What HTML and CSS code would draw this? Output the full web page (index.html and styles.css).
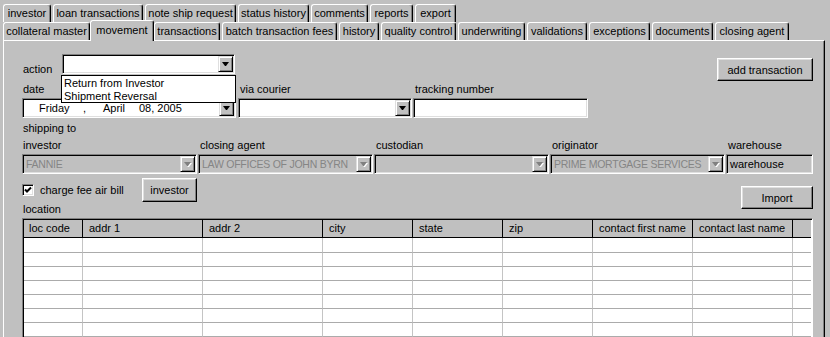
FILE: index.html
```html
<!DOCTYPE html>
<html lang="en">
<head>
  <meta charset="UTF-8" />
  <title>Collateral Movement</title>
  <link rel="stylesheet" href="styles.css">
</head>
<body>
  <div class="tabs">
    <div class="tab-row back">
      <div class="tab">investor</div>
      <div class="tab">loan transactions</div>
      <div class="tab">note ship request</div>
      <div class="tab">status history</div>
      <div class="tab">comments</div>
      <div class="tab">reports</div>
      <div class="tab">export</div>
    </div>
    <div class="tab-row front">
      <div class="tab">collateral master</div>
      <div class="tab active">movement</div>
      <div class="tab">transactions</div>
      <div class="tab">batch transaction fees</div>
      <div class="tab">history</div>
      <div class="tab">quality control</div>
      <div class="tab">underwriting</div>
      <div class="tab">validations</div>
      <div class="tab">exceptions</div>
      <div class="tab">documents</div>
      <div class="tab">closing agent</div>
    </div>
  </div>

  <div class="panel">
    <div class="action-row">
      <div class="lbl action-lbl">action</div>
      <div class="select action-select">
        <span class="value"></span>
        <span class="drop"></span>
        <ul class="popup">
          <li>Return from Investor</li>
          <li>Shipment Reversal</li>
        </ul>
      </div>
      <button class="btn add-btn">add transaction</button>
    </div>

    <div class="field-row">
      <div class="field date-field">
        <div class="lbl">date</div>
        <div class="select">
          <span class="value date-value"><span class="d-day">Friday</span><span class="d-comma">,</span><span class="d-month">April</span><span>08, 2005</span></span>
          <span class="drop"></span>
        </div>
      </div>
      <div class="field courier-field">
        <div class="lbl">via courier</div>
        <div class="select">
          <span class="value"></span>
          <span class="drop"></span>
        </div>
      </div>
      <div class="field tracking-field">
        <div class="lbl">tracking number</div>
        <div class="input"></div>
      </div>
    </div>

    <div class="lbl ship-lbl">shipping to</div>
    <div class="ship-row">
      <div class="field">
        <div class="lbl">investor</div>
        <div class="select off">
          <span class="value">FANNIE</span>
          <span class="drop"></span>
        </div>
      </div>
      <div class="field">
        <div class="lbl">closing agent</div>
        <div class="select off">
          <span class="value">LAW OFFICES OF JOHN BYRN</span>
          <span class="drop"></span>
        </div>
      </div>
      <div class="field">
        <div class="lbl">custodian</div>
        <div class="select off">
          <span class="value"></span>
          <span class="drop"></span>
        </div>
      </div>
      <div class="field">
        <div class="lbl">originator</div>
        <div class="select off">
          <span class="value">PRIME MORTGAGE SERVICES</span>
          <span class="drop"></span>
        </div>
      </div>
      <div class="field ware-field">
        <div class="lbl">warehouse</div>
        <div class="input off">warehouse</div>
      </div>
    </div>

    <div class="options-row">
      <div class="check">
        <span class="box">
          <svg width="8" height="8" viewBox="0 0 8 8"><polyline points="1,3.5 3,5.5 7,1.5" fill="none" stroke="#000" stroke-width="2"/></svg>
        </span>
        <span class="check-text">charge fee air bill</span>
      </div>
      <button class="btn inv-btn">investor</button>
      <button class="btn import-btn">Import</button>
    </div>

    <div class="lbl loc-lbl">location</div>
    <div class="grid">
      <div class="grid-head">
        <div>loc code</div>
        <div>addr 1</div>
        <div>addr 2</div>
        <div>city</div>
        <div>state</div>
        <div>zip</div>
        <div>contact first name</div>
        <div>contact last name</div>
        <div></div>
      </div>
      <div class="grid-body">
        <div class="grid-row"><div></div><div></div><div></div><div></div><div></div><div></div><div></div><div></div><div></div></div>
        <div class="grid-row"><div></div><div></div><div></div><div></div><div></div><div></div><div></div><div></div><div></div></div>
        <div class="grid-row"><div></div><div></div><div></div><div></div><div></div><div></div><div></div><div></div><div></div></div>
        <div class="grid-row"><div></div><div></div><div></div><div></div><div></div><div></div><div></div><div></div><div></div></div>
        <div class="grid-row"><div></div><div></div><div></div><div></div><div></div><div></div><div></div><div></div><div></div></div>
        <div class="grid-row"><div></div><div></div><div></div><div></div><div></div><div></div><div></div><div></div><div></div></div>
        <div class="grid-row"><div></div><div></div><div></div><div></div><div></div><div></div><div></div><div></div><div></div></div>
      </div>
    </div>
  </div>
</body>
</html>
```

FILE: styles.css
```css
* {
  box-sizing: border-box;
}

body {
  margin: 0;
  background: #c0c0c0;
  font-family: "Liberation Sans", Arial, sans-serif;
  font-size: 11px;
  color: #000;
  height: 337px;
  overflow: hidden;
}

/* tabs */
.tabs {
  padding: 4px 0 0 3px;
}

.tab-row {
  display: grid;
  gap: 2px;
  height: 18px;
}

.tab-row.back {
  grid-template-columns: 48px 90px 91px 71px 57px 43px 41px;
}

.tab-row.front {
  grid-template-columns: 87px 60px 66px 115px 40px 75px 67px 60px 61px 61px 74px;
}

.tab {
  border: 1px solid #fff;
  border-right-color: #000;
  border-bottom: none;
  border-radius: 3px 3px 0 0;
  box-shadow: inset -1px 0 #808080;
  text-align: center;
  line-height: 17px;
  white-space: nowrap;
}

.tab.active {
  position: relative;
  z-index: 2;
  margin: -2px -2px -1px;
  padding-top: 1px;
  background: #c0c0c0;
}

/* panel */
.panel {
  margin-left: 3px;
  width: 822px;
  height: 297px;
  overflow: hidden;
  border-top: 1px solid #fff;
  border-left: 1px solid #fff;
  border-right: 1px solid #000;
  box-shadow: inset -1px 0 #808080;
  padding: 13px 11px 0 18px;
}

.lbl {
  line-height: 14px;
  white-space: nowrap;
}

.btn {
  font: inherit;
  color: #000;
  background: #c0c0c0;
  border: 1px solid;
  border-color: #fff #000 #000 #fff;
  box-shadow: inset -1px -1px #808080, inset 1px 1px #dfdfdf;
  padding: 0;
}

.select, .input {
  position: relative;
  display: flex;
  height: 20px;
  background: #fff;
  border: 1px solid;
  border-color: #808080 #fff #fff #808080;
  box-shadow: inset 1px 1px #000, inset -1px -1px #dfdfdf;
  padding: 1px;
}

.value {
  flex: 1;
  min-width: 0;
  padding-left: 2px;
  line-height: 16px;
  overflow: hidden;
  white-space: nowrap;
}

.drop {
  width: 15px;
  height: 16px;
  flex: none;
  background: #c0c0c0;
  border: 1px solid;
  border-color: #dfdfdf #000 #000 #dfdfdf;
  box-shadow: inset 1px 1px #fff, inset -1px -1px #808080;
  display: flex;
  align-items: center;
  justify-content: center;
}

.drop::after {
  content: "";
  box-sizing: content-box;
  width: 1px;
  height: 0;
  border-top: 4px solid #000;
  border-left: 3px solid transparent;
  border-right: 3px solid transparent;
}

.select.off, .input.off {
  background: #c0c0c0;
}

.select.off .value {
  color: #858585;
  font-size: 10.5px;
  letter-spacing: -0.25px;
}

.select.off .drop::after {
  border-top-color: #808080;
  filter: drop-shadow(1px 1px 0 #fff);
}

.input.off {
  padding-left: 3px;
  line-height: 16px;
}

/* action row */
.action-row {
  display: flex;
  align-items: flex-start;
}

.action-lbl {
  width: 40px;
  padding-left: 1px;
  margin-top: 8px;
}

.action-select {
  width: 173px;
}

.popup {
  position: absolute;
  z-index: 5;
  left: -2px;
  top: 20px;
  width: 175px;
  height: 28px;
  margin: 0;
  padding: 1px 0 0;
  list-style: none;
  background: #fff;
  border: 1px solid #000;
}

.popup li {
  line-height: 13px;
  padding-left: 2px;
}

.add-btn {
  margin-left: auto;
  margin-top: 4px;
  width: 96px;
  height: 23px;
}

/* date / courier / tracking */
.field-row {
  display: flex;
  margin-top: 1px;
}

.field .lbl {
  margin-bottom: 2px;
  padding-left: 2px;
}

.date-field {
  width: 214px;
}

.date-field .lbl {
  padding-left: 1px;
}

.date-value {
  padding-left: 15px;
}

.date-value span {
  display: inline-block;
}

.d-day {
  width: 44px;
}

.d-comma {
  width: 20px;
}

.d-month {
  width: 36px;
}

.courier-field {
  width: 174px;
  margin-left: 2px;
}

.tracking-field {
  width: 175px;
  margin-left: 1px;
}

/* shipping to */
.ship-lbl {
  margin-top: 3px;
  padding-left: 1px;
}

.ship-row {
  display: flex;
  gap: 1px;
  margin-top: 3px;
}

.ship-row .field {
  width: 175px;
}

.ship-row .field:first-child .lbl {
  padding-left: 1px;
}

.ship-row .ware-field {
  width: 87px;
}

/* options */
.options-row {
  display: flex;
  align-items: flex-start;
  height: 24px;
  margin-top: 4px;
}

.check {
  width: 120px;
  height: 24px;
  display: flex;
  align-items: center;
}

.box {
  width: 12px;
  height: 12px;
  background: #fff;
  border: 1px solid;
  border-color: #808080 #fff #fff #808080;
  box-shadow: inset 1px 1px #000, inset -1px -1px #dfdfdf;
  display: flex;
  align-items: center;
  justify-content: center;
}

.check-text {
  margin-left: 6px;
}

.inv-btn {
  width: 55px;
  height: 24px;
}

.import-btn {
  margin-left: auto;
  margin-top: 8px;
  width: 72px;
  height: 23px;
}

.loc-lbl {
  padding-left: 1px;
}

/* location grid */
.grid {
  margin-top: 2px;
  width: 791px;
  height: 140px;
  background: #fff;
  border: 1px solid;
  border-color: #808080 #fff #fff #808080;
  box-shadow: inset 1px 1px #000;
  padding: 1px;
}

.grid-head, .grid-row {
  display: grid;
  grid-template-columns: 59px 120px 120px 90px 90px 90px 100px 100px 18px;
}

.grid-head div {
  height: 18px;
  background: #c0c0c0;
  border-right: 1px solid #000;
  border-bottom: 1px solid #000;
  padding-left: 6px;
  line-height: 17px;
  white-space: nowrap;
}

.grid-head div:first-child {
  padding-left: 5px;
}

.grid-head div:last-child {
  border-right: none;
}

.grid-row div {
  height: 14px;
  border-right: 1px solid #c4c4c4;
  border-bottom: 1px solid #ababab;
}

.grid-row:first-child div {
  height: 15px;
}

.grid-row div:last-child {
  border-right: none;
}
```
